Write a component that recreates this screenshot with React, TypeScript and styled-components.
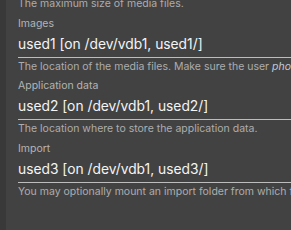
import React from 'react';
import styled, { createGlobalStyle } from 'styled-components';

const GlobalStyle = createGlobalStyle`
  html, body {
    margin: 0;
    padding: 0;
    background: #424242;
    overflow: hidden;
  }
`;

const Page = styled.div`
  display: flex;
  height: 230px;
  font-family: Inter, 'Noto Sans', sans-serif;
`;

const Rail = styled.div`
  width: 6px;
  flex: none;
  background: #393939;
`;

const Content = styled.div`
  flex: 1;
  display: flex;
  flex-direction: column;
  gap: 5.5px;
  margin-top: -3px;
  padding-left: 12px;
  min-width: 0;
`;

const Group = styled.div`
  display: flex;
  flex-direction: column;
`;

const Label = styled.div`
  font-size: 10.5px;
  line-height: 14px;
  color: #b4b4b4;
  white-space: nowrap;
`;

const Value = styled.div`
  margin-top: 2px;
  padding: 1px 0 3px;
  font-size: 13.8px;
  line-height: 20px;
  color: #f4f4f4;
  border-bottom: 1px solid #bdbdbd;
  white-space: nowrap;
`;

const Hint = styled.div<{ $first?: boolean }>`
  margin-top: ${(p) => (p.$first ? '0' : '2px')};
  font-size: 10.5px;
  line-height: 14px;
  color: #adadad;
  white-space: nowrap;
  overflow: hidden;

  i {
    color: #c3cad6;
  }
`;

const fields = [
  {
    label: 'Images',
    value: 'used1 [on /dev/vdb1, used1/]',
    hint: (
      <>
        The location of the media files. Make sure the user <i>photoprism</i> has write access.
      </>
    ),
  },
  {
    label: 'Application data',
    value: 'used2 [on /dev/vdb1, used2/]',
    hint: <>The location where to store the application data.</>,
  },
  {
    label: 'Import',
    value: 'used3 [on /dev/vdb1, used3/]',
    hint: <>You may optionally mount an import folder from which files can be imported.</>,
  },
];

export default function App(): JSX.Element {
  return (
    <>
      <GlobalStyle />
      <Page>
        <Rail />
        <Content>
          <Hint $first>The maximum size of media files.</Hint>
          {fields.map((f) => (
            <Group key={f.label}>
              <Label>{f.label}</Label>
              <Value>{f.value}</Value>
              <Hint>{f.hint}</Hint>
            </Group>
          ))}
        </Content>
      </Page>
    </>
  );
}
